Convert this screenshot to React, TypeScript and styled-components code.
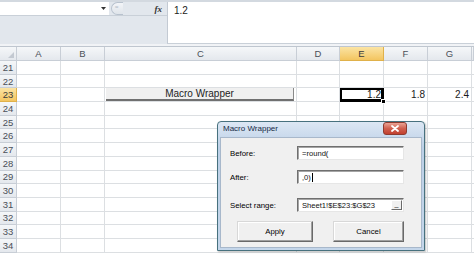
import { Fragment } from "react";
import styled, { createGlobalStyle } from "styled-components";

const GlobalStyle = createGlobalStyle`
  html, body {
    margin: 0;
    padding: 0;
    background: #ffffff;
  }
  body {
    width: 474px;
    height: 255px;
    overflow: hidden;
    font-family: "Liberation Sans", Arial, sans-serif;
  }
  * {
    box-sizing: border-box;
  }
`;

const Page = styled.div`
  position: relative;
  width: 474px;
  height: 255px;
  overflow: hidden;
  background: #fff;
`;

/* ---------- formula bar ---------- */

const FormulaBar = styled.div`
  display: flex;
  height: 44px;
  border-top: 2px solid #d3d9e0;
  background: #e2e7ed;
`;

const LeftBlock = styled.div`
  width: 167px;
  display: flex;
  flex-direction: column;
`;

const NameRow = styled.div`
  display: flex;
  height: 14px;
  border-bottom: 1px solid #c9d0d8;
`;

const NameBox = styled.div`
  width: 109px;
  background: #fff;
  display: flex;
  align-items: center;
  justify-content: flex-end;
  padding-right: 3px;
`;

const ButtonStrip = styled.div`
  flex: 1;
  display: flex;
  align-items: center;
  justify-content: space-between;
  padding-right: 5px;
`;

const Pill = styled.div`
  width: 12px;
  height: 13px;
  margin-left: 2px;
  border: 1px solid #b8c2ce;
  border-right: none;
  border-radius: 8px 0 0 8px;
  background: linear-gradient(#f3f5f8, #dfe4ea);
  font-size: 6px;
  color: #a8b2be;
  padding-left: 3px;
  line-height: 8px;
`;

const Fx = styled.span`
  font-family: "Liberation Serif", serif;
  font-style: italic;
  font-weight: bold;
  font-size: 9px;
  color: #333;
`;

const FormulaInput = styled.div`
  flex: 1;
  background: #fff;
  border-left: 1px solid #c3cad3;
  border-bottom: 1px solid #c9d0d8;
  font-size: 10px;
  color: #222;
  padding: 3px 0 0 6px;
`;

const Spacer = styled.div`
  height: 3px;
  background: #f1f3f6;
  border-bottom: 1px solid #bfc6cf;
`;

/* ---------- sheet grid ---------- */

const Sheet = styled.div`
  display: grid;
  grid-template-columns: 17px 44px 44px 192px 43px 44px 44px 44px 2px;
  grid-template-rows: 14px;
  grid-auto-rows: 13.7px;
  font-size: 10px;
  color: #1a1a1a;
`;

const Header = styled.div<{ $hot?: boolean; $row?: boolean }>`
  display: flex;
  align-items: center;
  justify-content: center;
  font-size: ${(p) => (p.$row ? "9.5px" : "9.5px")};
  color: ${(p) => (p.$hot ? "#3b3b3b" : "#4a4f57")};
  background: ${(p) =>
    p.$hot
      ? "linear-gradient(#fbe4a4, #f3c560)"
      : "linear-gradient(#f5f7f9, #e4e8ed)"};
  border-right: 1px solid ${(p) => (p.$hot ? "#e0b14a" : "#c8ced6")};
  border-bottom: 1px solid ${(p) => (p.$hot ? "#e0b14a" : "#c8ced6")};
`;

const Corner = styled(Header)`
  align-items: flex-end;
  justify-content: flex-end;
  padding: 0 2px 2px 0;
`;

const Cell = styled.div<{ $active?: boolean }>`
  position: relative;
  display: flex;
  align-items: center;
  justify-content: flex-end;
  padding-right: 2px;
  border-right: 1px solid #dcdfe2;
  border-bottom: 1px solid #dcdfe2;
  ${(p) =>
    p.$active &&
    `
    box-shadow: inset 0 0 0 2px #000;
    border-color: #000;
    z-index: 1;
  `}
`;

const FillHandle = styled.span`
  position: absolute;
  right: -3px;
  bottom: -3px;
  width: 5px;
  height: 5px;
  background: #000;
  border: 1px solid #fff;
`;

const SheetButton = styled.div`
  flex: 1;
  align-self: stretch;
  display: flex;
  align-items: center;
  justify-content: center;
  margin: 0 0 0 1px;
  background: #f0f0f0;
  border-bottom: 2px solid #707070;
  border-right: 1px solid #8a8a8a;
  font-size: 10px;
  color: #1d1d1d;
`;

/* ---------- dialog ---------- */

const Dialog = styled.div`
  position: absolute;
  left: 217px;
  top: 121px;
  width: 208px;
  height: 130px;
  border: 1px solid #47717e;
  border-radius: 4px 4px 0 0;
  background: linear-gradient(#dce7f4, #bcd0e7 20%, #c4d6ea);
  padding: 0 2px 2px 2px;
  display: flex;
  flex-direction: column;
  box-shadow: 1px 1px 2px rgba(0, 0, 0, 0.25);
  font-size: 7.8px;
  color: #000;
`;

const TitleBar = styled.div`
  height: 17px;
  display: flex;
  align-items: center;
  justify-content: space-between;
  padding: 0 15px 2px 3px;
  font-size: 8px;
  color: #152a45;
`;

const CloseButton = styled.div`
  width: 24px;
  height: 13px;
  border: 1px solid #8e3b30;
  border-radius: 3px;
  background: linear-gradient(#eba394, #d0604f 50%, #c2402f);
  display: flex;
  align-items: center;
  justify-content: center;
`;

const Body = styled.div`
  flex: 1;
  background: #f0f0f0;
  border: 1px solid #a8b8cb;
  padding: 8px 17px 5px 9px;
  display: flex;
  flex-direction: column;
`;

const FieldRow = styled.div<{ $top: number }>`
  display: flex;
  align-items: center;
  margin-top: ${(p) => p.$top}px;
  height: 14px;
`;

const Label = styled.div`
  width: 67px;
`;

const TextBox = styled.div`
  flex: 1;
  height: 14px;
  display: flex;
  align-items: center;
  background: #fff;
  border: 1px solid;
  border-color: #6f6f6f #e6e6e6 #e6e6e6 #6f6f6f;
  box-shadow: inset 1px 1px 0 #a5a5a5;
  padding-left: 4px;
  font-size: 7.6px;
  color: #111;
`;

const Caret = styled.span`
  display: inline-block;
  width: 1px;
  height: 9px;
  background: #000;
  margin-left: 1px;
`;

const RefButton = styled.div`
  width: 11px;
  height: 10px;
  margin: 0 1px 0 auto;
  background: #f0f0f0;
  border: 1px solid;
  border-color: #fff #6a6a6a #6a6a6a #fff;
  font-size: 7px;
  line-height: 6px;
  text-align: center;
`;

const ButtonRow = styled.div`
  display: flex;
  justify-content: space-between;
  margin-top: 9px;
  padding-left: 7px;
`;

const PushButton = styled.div<{ $w: number }>`
  width: ${(p) => p.$w}px;
  height: 21px;
  display: flex;
  align-items: center;
  justify-content: center;
  background: #f0f0f0;
  border: 1px solid;
  border-color: #d8d8d8 #696969 #696969 #d8d8d8;
  box-shadow: inset -1px -1px 0 #a0a0a0, inset 1px 1px 0 #fff;
  font-size: 7.8px;
`;

const columns = ["A", "B", "C", "D", "E", "F", "G"];
const rows = [21, 22, 23, 24, 25, 26, 27, 28, 29, 30, 31, 32, 33, 34];
const values: Record<string, string> = { E: "1.2", F: "1.8", G: "2.4" };

export default function App() {
  return (
    <Page>
      <GlobalStyle />
      <FormulaBar>
        <LeftBlock>
          <NameRow>
            <NameBox>
              <svg width="5" height="3" viewBox="0 0 5 3">
                <path d="M0 0h5L2.5 3z" fill="#333" />
              </svg>
            </NameBox>
            <ButtonStrip>
              <Pill>≈</Pill>
              <Fx>fx</Fx>
            </ButtonStrip>
          </NameRow>
        </LeftBlock>
        <FormulaInput>1.2</FormulaInput>
      </FormulaBar>
      <Spacer />

      <Sheet>
        <Corner>
          <svg width="6" height="6" viewBox="0 0 6 6">
            <path d="M6 0v6H0z" fill="#c3c9d1" />
          </svg>
        </Corner>
        {columns.map((c) => (
          <Header key={c} $hot={c === "E"}>
            {c}
          </Header>
        ))}
        <Header />

        {rows.map((r) => (
          <Fragment key={r}>
            <Header $row $hot={r === 23}>
              {r}
            </Header>
            {columns.map((c) => (
              <Cell key={c} $active={r === 23 && c === "E"}>
                {r === 23 && c === "C" && <SheetButton>Macro Wrapper</SheetButton>}
                {r === 23 && values[c]}
                {r === 23 && c === "E" && <FillHandle />}
              </Cell>
            ))}
            <Cell />
          </Fragment>
        ))}
      </Sheet>

      <Dialog>
        <TitleBar>
          <span>Macro Wrapper</span>
          <CloseButton>
            <svg width="8" height="7" viewBox="0 0 8 7">
              <path
                d="M1 1l6 5M7 1L1 6"
                stroke="#fff"
                strokeWidth="1.8"
                strokeLinecap="round"
              />
            </svg>
          </CloseButton>
        </TitleBar>
        <Body>
          <FieldRow $top={0}>
            <Label>Before:</Label>
            <TextBox>=round(</TextBox>
          </FieldRow>
          <FieldRow $top={10}>
            <Label>After:</Label>
            <TextBox>
              ,0)
              <Caret />
            </TextBox>
          </FieldRow>
          <FieldRow $top={14}>
            <Label>Select range:</Label>
            <TextBox>
              Sheet1!$E$23:$G$23
              <RefButton>_</RefButton>
            </TextBox>
          </FieldRow>
          <ButtonRow>
            <PushButton $w={76}>Apply</PushButton>
            <PushButton $w={71}>Cancel</PushButton>
          </ButtonRow>
        </Body>
      </Dialog>
    </Page>
  );
}
